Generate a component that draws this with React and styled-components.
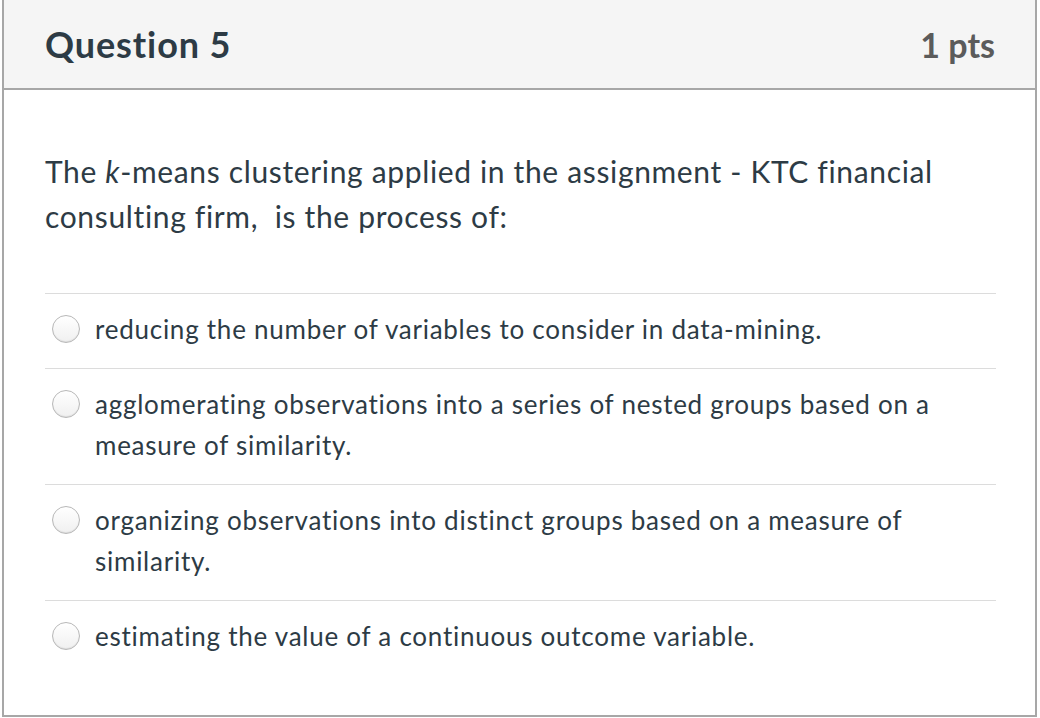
import React from 'react';
import styled, { createGlobalStyle } from 'styled-components';

const GlobalStyle = createGlobalStyle`
  html, body {
    margin: 0;
    padding: 0;
    background: #ffffff;
  }
  body {
    font-family: Lato, "Open Sans", "Liberation Sans", sans-serif;
    color: #2d3b45;
  }
`;

const answers = [
  'reducing the number of variables to consider in data-mining.',
  'agglomerating observations into a series of nested groups based on a measure of similarity.',
  'organizing observations into distinct groups based on a measure of similarity.',
  'estimating the value of a continuous outcome variable.',
];

const App = () => {
  return (
    <>
      <GlobalStyle />
      <QuestionCard>
        <Header>
          <Title>Question 5</Title>
          <Points>1 pts</Points>
        </Header>
        <Body>
          <QuestionText>
            The <em>k</em>-means clustering applied in the assignment - KTC financial consulting firm,&nbsp; is the process of:
          </QuestionText>
          <AnswerList>
            {answers.map((a) => (
              <Answer key={a}>
                <Radio />
                <AnswerLabel>{a}</AnswerLabel>
              </Answer>
            ))}
          </AnswerList>
        </Body>
      </QuestionCard>
    </>
  );
};

export default App;

const QuestionCard = styled.section`
  box-sizing: border-box;
  margin-left: 2px;
  width: 1035px;
  height: 717px;
  border: 2px solid #a7a7a7;
  border-top: none;
  display: flex;
  flex-direction: column;
`;

const Header = styled.div`
  display: flex;
  justify-content: space-between;
  align-items: center;
  height: 88px;
  padding: 0 40px 0 41px;
  background-color: #f5f5f5;
  border-bottom: 2px solid #a7a7a7;
`;

const Title = styled.h2`
  margin: 0;
  font-size: 36px;
  font-weight: 700;
  letter-spacing: 0.9px;
  color: #2d3b45;
`;

const Points = styled.div`
  font-size: 34px;
  font-weight: 700;
  letter-spacing: 0;
  color: #5b5b5b;
`;

const Body = styled.div`
  padding: 59px 39px 0 41px;
`;

const QuestionText = styled.p`
  margin: 0;
  font-size: 30px;
  line-height: 45px;
  letter-spacing: 0.65px;
  color: #2d3b45;
  em {
    font-style: italic;
  }
`;

const AnswerList = styled.div`
  margin-top: 54px;
`;

const Answer = styled.div`
  display: flex;
  align-items: flex-start;
  gap: 15px;
  padding: 15px 0 18px 7px;
  border-top: 1px solid #dcdcdc;
`;

const Radio = styled.span`
  flex: none;
  box-sizing: border-box;
  width: 28px;
  height: 28px;
  margin-top: 6px;
  border-radius: 50%;
  border: 1px solid #b8b8b8;
  background: linear-gradient(#ffffff, #f0f0f0);
  box-shadow: inset 0 -1px 1px rgba(0, 0, 0, 0.08);
`;

const AnswerLabel = styled.span`
  font-size: 26px;
  line-height: 41px;
  letter-spacing: 0.75px;
  color: #2d3b45;
`;
